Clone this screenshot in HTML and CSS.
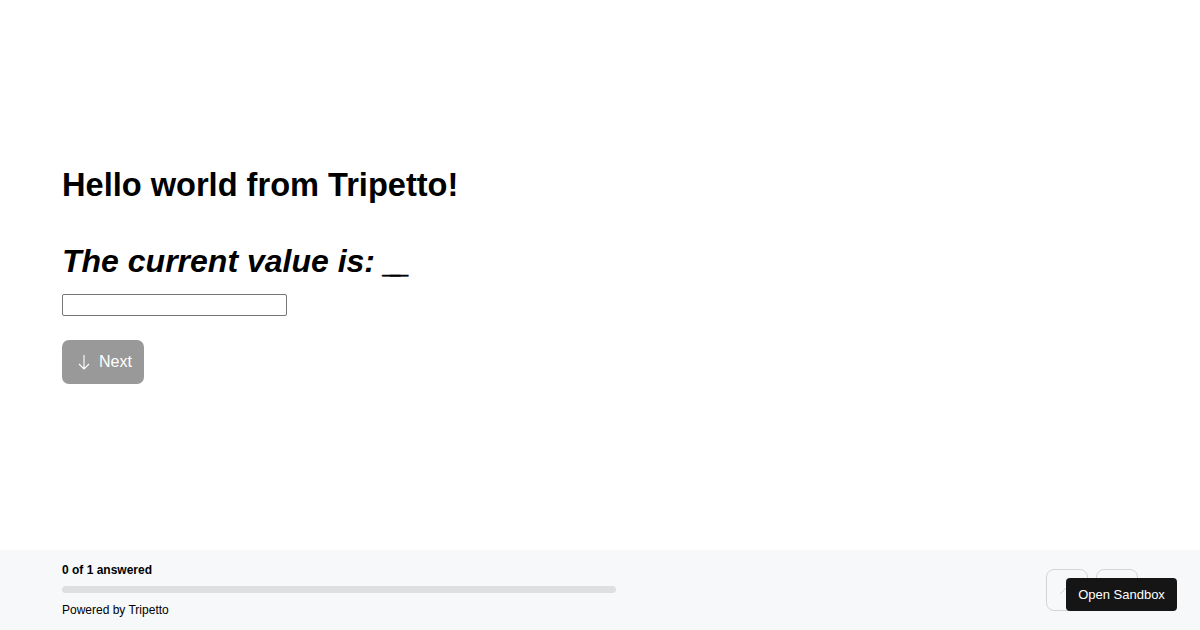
FILE: index.html
```html
<!DOCTYPE html>
<html>
<head>
<meta charset="utf-8">
<link rel="stylesheet" href="styles.css">
</head>
<body>
<div class="page">
  <main class="main">
    <div class="content">
      <h1 class="title">Hello world from Tripetto!</h1>
      <h2 class="question">The current value is: <span class="blank">__</span></h2>
      <input class="field" type="text">
      <div class="actions">
        <button class="next">
          <svg class="next-icon" width="12" height="16" viewBox="0 0 12 16"><path d="M6 1v14M1 10l5 5 5-5" fill="none" stroke="#fff" stroke-width="1.1"/></svg>
          <span>Next</span>
        </button>
      </div>
    </div>
  </main>
  <footer class="footer">
    <div class="progress">
      <div class="answered">0 of 1 answered</div>
      <div class="bar"></div>
      <div class="powered">Powered by Tripetto</div>
    </div>
    <div class="nav">
      <button class="nav-btn"><svg width="20" height="20" viewBox="0 0 20 20"><path d="M3 14l7-7 7 7" fill="none" stroke="#d4d4d4" stroke-width="1"/></svg></button>
      <button class="nav-btn"><svg width="20" height="20" viewBox="0 0 20 20"><path d="M3 6l7 7 7-7" fill="none" stroke="#d4d4d4" stroke-width="1"/></svg></button>
    </div>
  </footer>
  <a class="sandbox">Open Sandbox</a>
</div>
</body>
</html>
```
FILE: styles.css
```css
html, body {
  margin: 0;
  padding: 0;
  background: #fff;
  font-family: "Liberation Sans", Arial, sans-serif;
}
.page {
  width: 1200px;
  height: 630px;
  display: flex;
  flex-direction: column;
  position: relative;
  overflow: hidden;
}
.main {
  height: 550px;
  box-sizing: border-box;
  padding-top: 167px;
}
.content {
  padding: 0 62px;
}
.title {
  margin: 0;
  font-size: 32.6px;
  font-weight: bold;
  line-height: 36px;
  color: #000;
}
.question {
  margin: 40px 0 0 0;
  font-size: 32px;
  font-style: italic;
  font-weight: bold;
  line-height: 36px;
  color: #000;
}
.blank {
  letter-spacing: -10px;
  -webkit-text-stroke: 0.6px #000;
}
.field {
  display: block;
  margin: 15px 0 0 0;
  width: 225px;
  height: 22px;
  box-sizing: border-box;
  border: 1px solid #767676;
  border-radius: 2px;
  padding: 1px 2px;
  font-size: 13px;
}
.actions {
  margin-top: 24px;
}
.next {
  display: flex;
  align-items: center;
  gap: 9px;
  height: 44px;
  width: 82px;
  padding: 0 0 0 16px;
  box-sizing: border-box;
  background: #999999;
  border: none;
  border-radius: 7px;
  color: #fff;
  font-family: "Liberation Sans", Arial, sans-serif;
  font-size: 16px;
}
.next-icon {
  display: block;
}
.footer {
  height: 80px;
  background: #f7f8fa;
  display: flex;
  justify-content: space-between;
  align-items: center;
  padding: 0 62px;
}
.progress {
  width: 554px;
  display: flex;
  flex-direction: column;
}
.answered {
  font-size: 12px;
  font-weight: bold;
  color: #000;
  line-height: 14px;
}
.bar {
  margin-top: 9px;
  height: 7px;
  border-radius: 4px;
  background: #dedfe1;
}
.powered {
  margin-top: 10px;
  font-size: 12px;
  color: #000;
  line-height: 14px;
}
.nav {
  display: flex;
  gap: 8px;
}
.nav-btn {
  width: 42px;
  height: 42px;
  border: 1px solid #d4d4d4;
  border-radius: 8px;
  background: transparent;
  display: flex;
  align-items: center;
  justify-content: center;
  padding: 0;
}
.sandbox {
  position: absolute;
  right: 23px;
  bottom: 19px;
  width: 111px;
  height: 33px;
  box-sizing: border-box;
  background: #151515;
  color: #fff;
  border-radius: 4px;
  font-size: 13px;
  display: flex;
  align-items: center;
  justify-content: center;
}
```
